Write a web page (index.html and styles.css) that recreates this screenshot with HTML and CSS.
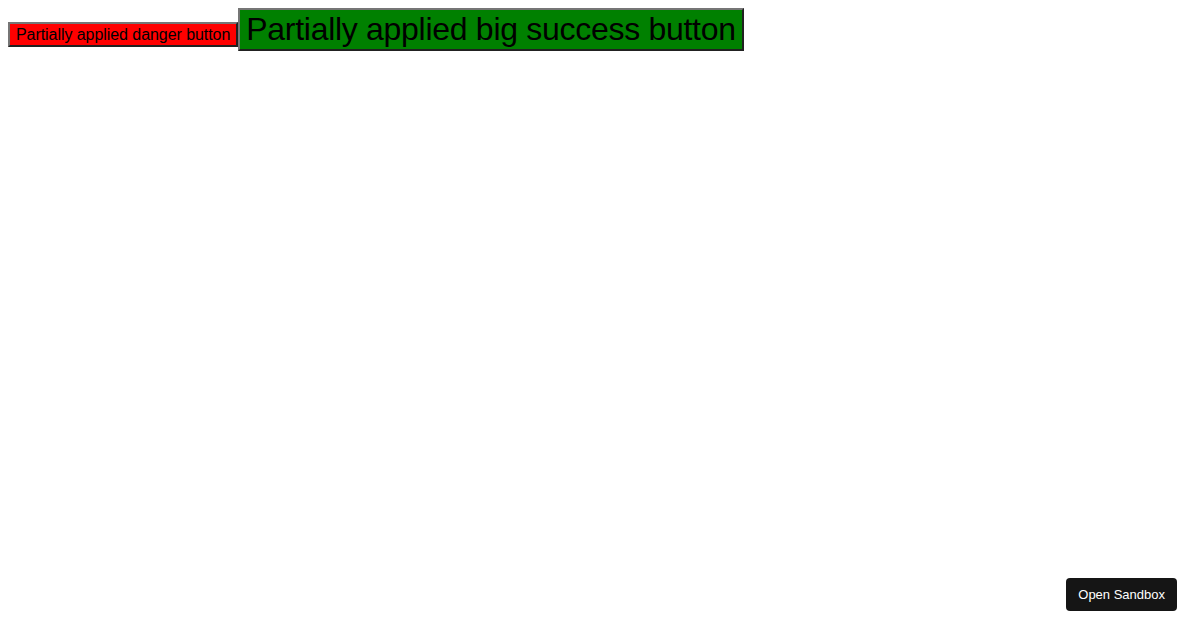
FILE: index.html
```html
<!DOCTYPE html>
<html>
<head>
<meta charset="utf-8">
<link rel="stylesheet" href="styles.css">
</head>
<body>
<button class="btn btn-danger">Partially applied danger button</button><button class="btn btn-success">Partially applied big success button</button>
<a class="sandbox">Open Sandbox</a>
</body>
</html>
```
FILE: styles.css
```css
body {
  margin: 8px;
  font-family: "Liberation Sans", Arial, sans-serif;
}
.btn {
  font-family: "Liberation Sans", Arial, sans-serif;
  color: #000;
  border: 2px outset #767676;
  padding: 1px 6px;
  margin: 0;
  vertical-align: baseline;
}
.btn-danger {
  background: #ff0000;
  font-size: 16px;
  line-height: 19px;
  letter-spacing: -0.06px;
}
.btn-success {
  background: #008000;
  font-size: 32px;
  line-height: 37px;
  letter-spacing: -0.29px;
}
.sandbox {
  position: fixed;
  right: 23px;
  bottom: 19px;
  background: #151515;
  color: #fff;
  font-family: "Liberation Sans", Arial, sans-serif;
  font-size: 13px;
  white-space: nowrap;
  padding: 0 12px;
  height: 33px;
  line-height: 33px;
  border-radius: 4px;
  box-sizing: border-box;
}
```
